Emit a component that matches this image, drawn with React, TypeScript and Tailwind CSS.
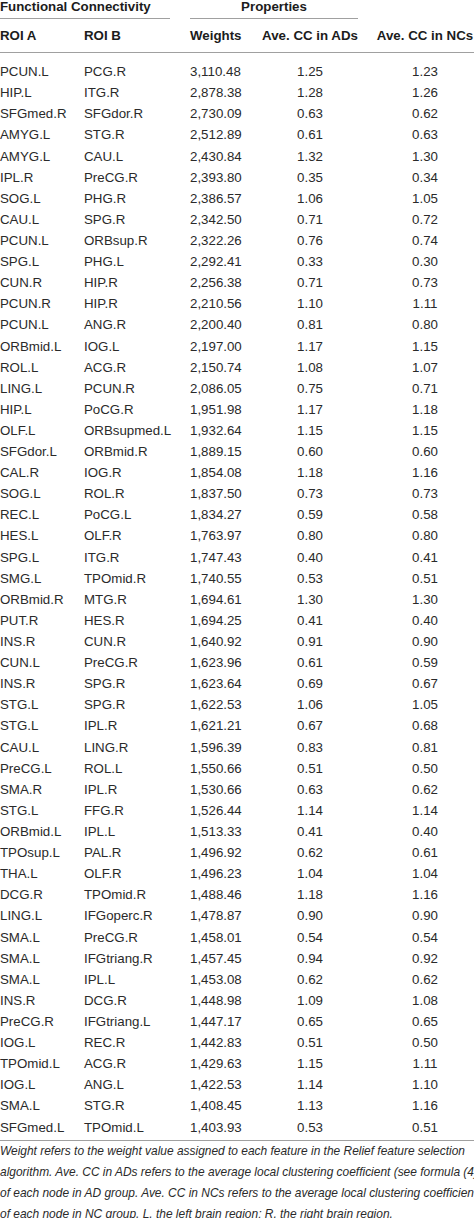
import React from "react";

const rows: [string, string, string, string, string][] = [
  ["PCUN.L", "PCG.R", "3,110.48", "1.25", "1.23"],
  ["HIP.L", "ITG.R", "2,878.38", "1.28", "1.26"],
  ["SFGmed.R", "SFGdor.R", "2,730.09", "0.63", "0.62"],
  ["AMYG.L", "STG.R", "2,512.89", "0.61", "0.63"],
  ["AMYG.L", "CAU.L", "2,430.84", "1.32", "1.30"],
  ["IPL.R", "PreCG.R", "2,393.80", "0.35", "0.34"],
  ["SOG.L", "PHG.R", "2,386.57", "1.06", "1.05"],
  ["CAU.L", "SPG.R", "2,342.50", "0.71", "0.72"],
  ["PCUN.L", "ORBsup.R", "2,322.26", "0.76", "0.74"],
  ["SPG.L", "PHG.L", "2,292.41", "0.33", "0.30"],
  ["CUN.R", "HIP.R", "2,256.38", "0.71", "0.73"],
  ["PCUN.R", "HIP.R", "2,210.56", "1.10", "1.11"],
  ["PCUN.L", "ANG.R", "2,200.40", "0.81", "0.80"],
  ["ORBmid.L", "IOG.L", "2,197.00", "1.17", "1.15"],
  ["ROL.L", "ACG.R", "2,150.74", "1.08", "1.07"],
  ["LING.L", "PCUN.R", "2,086.05", "0.75", "0.71"],
  ["HIP.L", "PoCG.R", "1,951.98", "1.17", "1.18"],
  ["OLF.L", "ORBsupmed.L", "1,932.64", "1.15", "1.15"],
  ["SFGdor.L", "ORBmid.R", "1,889.15", "0.60", "0.60"],
  ["CAL.R", "IOG.R", "1,854.08", "1.18", "1.16"],
  ["SOG.L", "ROL.R", "1,837.50", "0.73", "0.73"],
  ["REC.L", "PoCG.L", "1,834.27", "0.59", "0.58"],
  ["HES.L", "OLF.R", "1,763.97", "0.80", "0.80"],
  ["SPG.L", "ITG.R", "1,747.43", "0.40", "0.41"],
  ["SMG.L", "TPOmid.R", "1,740.55", "0.53", "0.51"],
  ["ORBmid.R", "MTG.R", "1,694.61", "1.30", "1.30"],
  ["PUT.R", "HES.R", "1,694.25", "0.41", "0.40"],
  ["INS.R", "CUN.R", "1,640.92", "0.91", "0.90"],
  ["CUN.L", "PreCG.R", "1,623.96", "0.61", "0.59"],
  ["INS.R", "SPG.R", "1,623.64", "0.69", "0.67"],
  ["STG.L", "SPG.R", "1,622.53", "1.06", "1.05"],
  ["STG.L", "IPL.R", "1,621.21", "0.67", "0.68"],
  ["CAU.L", "LING.R", "1,596.39", "0.83", "0.81"],
  ["PreCG.L", "ROL.L", "1,550.66", "0.51", "0.50"],
  ["SMA.R", "IPL.R", "1,530.66", "0.63", "0.62"],
  ["STG.L", "FFG.R", "1,526.44", "1.14", "1.14"],
  ["ORBmid.L", "IPL.L", "1,513.33", "0.41", "0.40"],
  ["TPOsup.L", "PAL.R", "1,496.92", "0.62", "0.61"],
  ["THA.L", "OLF.R", "1,496.23", "1.04", "1.04"],
  ["DCG.R", "TPOmid.R", "1,488.46", "1.18", "1.16"],
  ["LING.L", "IFGoperc.R", "1,478.87", "0.90", "0.90"],
  ["SMA.L", "PreCG.R", "1,458.01", "0.54", "0.54"],
  ["SMA.L", "IFGtriang.R", "1,457.45", "0.94", "0.92"],
  ["SMA.L", "IPL.L", "1,453.08", "0.62", "0.62"],
  ["INS.R", "DCG.R", "1,448.98", "1.09", "1.08"],
  ["PreCG.R", "IFGtriang.L", "1,447.17", "0.65", "0.65"],
  ["IOG.L", "REC.R", "1,442.83", "0.51", "0.50"],
  ["TPOmid.L", "ACG.R", "1,429.63", "1.15", "1.11"],
  ["IOG.L", "ANG.L", "1,422.53", "1.14", "1.10"],
  ["SMA.L", "STG.R", "1,408.45", "1.13", "1.16"],
  ["SFGmed.L", "TPOmid.L", "1,403.93", "0.53", "0.51"],
];

export default function App() {
  return (
    <div
      className="w-[474px] h-[1218px] overflow-hidden bg-white text-[#2a2a2a]"
      style={{ fontFamily: '"Liberation Sans", Arial, sans-serif' }}
    >
      {/* top header */}
      <div className="flex h-[19px] items-center text-[13.3px] font-bold text-[#1c1c1c] leading-none">
        <div className="w-[170px] h-full flex items-center border-b border-[#a0a0a0] whitespace-nowrap pb-[5px]">
          Functional Connectivity
        </div>
        <div className="w-[20px]" />
        <div className="w-[168px] h-full flex items-center justify-center border-b border-[#a0a0a0] whitespace-nowrap pb-[5px]">
          Properties
        </div>
      </div>
      {/* second header */}
      <div className="flex h-[34px] items-center text-[13.3px] font-bold text-[#1c1c1c] border-b-[1.5px] border-[#a0a0a0] whitespace-nowrap w-[490px]">
        <div className="w-[84px]">ROI A</div>
        <div className="w-[106px]">ROI B</div>
        <div className="w-[68px]">Weights</div>
        <div className="w-[104px] text-center">Ave. CC in ADs</div>
        <div className="w-[126px] text-center">Ave. CC in NCs</div>
      </div>
      {/* body */}
      <div className="pt-[8.5px] pb-[1.5px] border-b-[1.5px] border-[#a0a0a0] w-[490px]">
        {rows.map((r, i) => (
          <div key={i} className="flex h-[21.12px] items-center text-[13.3px] whitespace-nowrap">
            <div className="w-[84px]">{r[0]}</div>
            <div className="w-[106px]">{r[1]}</div>
            <div className="w-[68px]">{r[2]}</div>
            <div className="w-[104px] text-center">{r[3]}</div>
            <div className="w-[126px] text-center">{r[4]}</div>
          </div>
        ))}
      </div>
      {/* footnote */}
      <div className="italic text-[11.95px] leading-[21px] text-[#2a2a2a] whitespace-nowrap w-[520px]">
        <div>Weight refers to the weight value assigned to each feature in the Relief feature selection</div>
        <div>algorithm. Ave. CC in ADs refers to the average local clustering coefficient (see formula (4)),</div>
        <div>of each node in AD group. Ave. CC in NCs refers to the average local clustering coefficient</div>
        <div>of each node in NC group. L, the left brain region; R, the right brain region.</div>
      </div>
    </div>
  );
}
